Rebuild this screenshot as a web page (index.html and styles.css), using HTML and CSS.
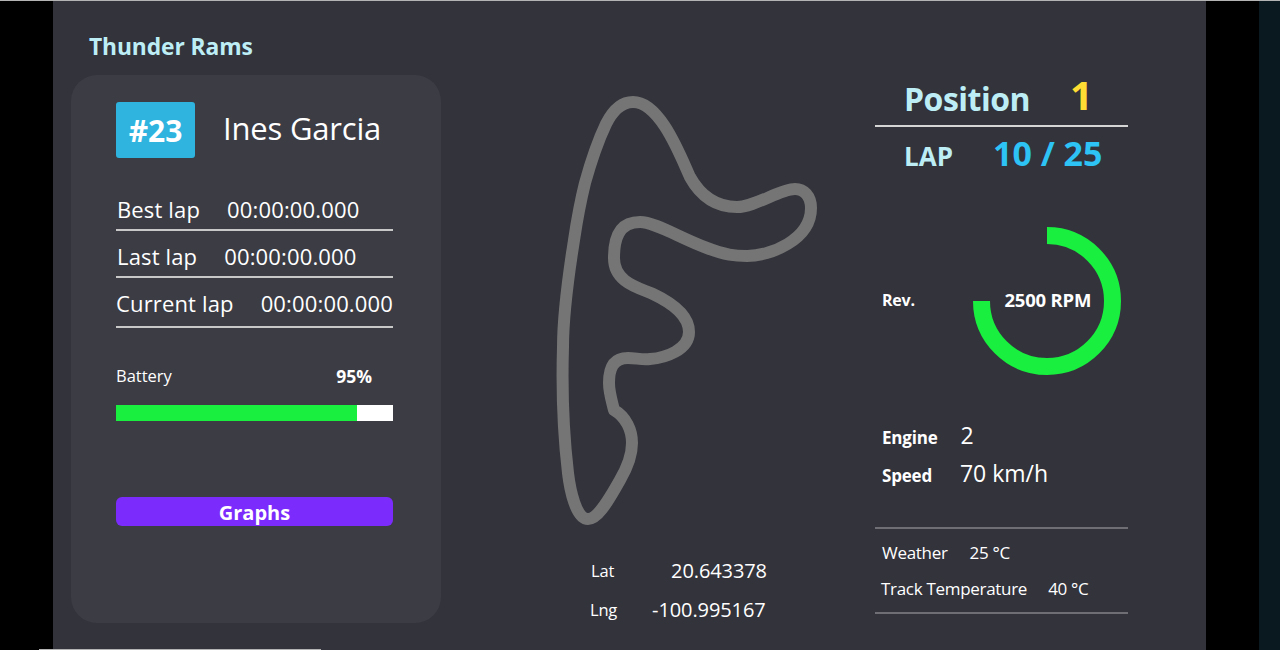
FILE: index.html
```html
<!DOCTYPE html>
<html lang="en">
<head>
    <meta charset="UTF-8">
    <meta name="viewport" content="width=device-width, initial-scale=1.0">
    <title>Thunder Rams Telemetry</title>
    <link rel="stylesheet" href="styles.css">
</head>
<body>

<div class="screen">
    <div class="dashboard">
        <!-- Left column: team and driver card -->
        <div class="col-left">
            <h1 class="team">Thunder Rams</h1>
            <div class="card">
                <div class="driver">
                    <span class="number">#23</span>
                    <span class="name">Ines Garcia</span>
                </div>
                <div class="lap-row lap-best"><span>Best lap</span><span>00:00:00.000</span></div>
                <div class="lap-row lap-last"><span>Last lap</span><span>00:00:00.000</span></div>
                <div class="lap-row lap-current"><span>Current lap</span><span>00:00:00.000</span></div>
                <div class="battery-head">
                    <span>Battery</span>
                    <strong>95%</strong>
                </div>
                <div class="battery-bar"><div class="battery-fill" style="width: 87%"></div></div>
                <button class="graphs-btn">Graphs</button>
            </div>
        </div>

        <!-- Center column: track map and coordinates -->
        <div class="col-center">
            <svg class="track" viewBox="550 90 280 440" width="280" height="440">
                <path fill="none" stroke="#757575" stroke-width="12" stroke-linejoin="round" d="M633 102
                    C620 102 612 112 606 124
                    C596 145 590 165 585 183
                    C577 215 575 235 572 253
                    C565 300 563 325 563 347
                    C562 380 563 430 568 473
                    C570 490 576 519 588 519
                    C597 519 606 505 620 480
                    C627 468 632 455 632 443
                    C632 430 626 417 614 410
                    C611 398 609 392 609 383
                    C609 370 612 358 628 358
                    C636 358 642 360 650 359
                    C665 358 689 350 689 332
                    C689 316 672 303 653 294
                    C640 288 614 283 614 258
                    C614 240 618 222 640 222
                    C655 222 680 238 707 248
                    C725 255 735 256 747 256
                    C770 256 811 240 811 208
                    C811 196 804 189 795 189
                    C780 189 755 207 737 207
                    C715 207 700 195 690 177
                    C680 155 660 102 633 102 Z"/>
            </svg>
            <div class="coord coord-lat"><span class="coord-label">Lat</span><span class="coord-value">20.643378</span></div>
            <div class="coord coord-lng"><span class="coord-label">Lng</span><span class="coord-value">-100.995167</span></div>
        </div>

        <!-- Right column: race stats -->
        <div class="col-right">
            <div class="position">
                <span class="position-label">Position</span>
                <span class="position-value">1</span>
            </div>
            <div class="lap-count">
                <span class="lap-label">LAP</span>
                <span class="lap-value">10 / 25</span>
            </div>
            <div class="rev">
                <span class="rev-label">Rev.</span>
                <div class="gauge">
                    <svg viewBox="0 0 150 150" width="150" height="150">
                        <path fill="none" stroke="#18ef3e" stroke-width="17" d="M75 9.5 A65.5 65.5 0 1 1 9.5 75"/>
                    </svg>
                    <span class="gauge-text">2500 RPM</span>
                </div>
            </div>
            <div class="stat stat-engine"><strong>Engine</strong><span>2</span></div>
            <div class="stat stat-speed"><strong>Speed</strong><span>70 km/h</span></div>
            <div class="conditions">
                <div class="cond cond-weather"><span>Weather</span><span>25 °C</span></div>
                <div class="cond cond-track"><span>Track Temperature</span><span>40 °C</span></div>
            </div>
        </div>
    </div>
    <div class="side-strip"></div>
    <!-- Scrollbar sliver along the bottom edge -->
    <div class="scroll-thumb"></div>
</div>

</body>
</html>
```

FILE: styles.css
```css
/* General page */
html, body {
    margin: 0;
    height: 100%;
    overflow: hidden;
    background-color: #000000;
}
body {
    font-family: "Open Sans", "Noto Sans", "Liberation Sans", sans-serif;
    color: #ffffff;
}
.screen {
    position: relative;
    box-sizing: border-box;
    height: 650px;
    padding-left: 53px;
    border-top: 1px solid #b4b4b4;
    display: flex;
    justify-content: space-between;
}
.dashboard {
    width: 1153px;
    height: 649px;
    background-color: #32333b;
    display: flex;
}
.side-strip {
    width: 21px;
    background-color: #0a1820;
}
.scroll-thumb {
    position: absolute;
    left: 39px;
    bottom: 0;
    width: 282px;
    height: 1px;
    background-color: #b4b4b4;
}

/* Left column */
.col-left {
    width: 388px;
    padding-left: 18px;
    box-sizing: border-box;
}
.team {
    margin: 32px 0 0 18px;
    font-size: 22.8px;
    line-height: 28px;
    font-weight: 700;
    letter-spacing: -0.1px;
    color: #bdeef6;
}
.card {
    margin-top: 14px;
    width: 370px;
    height: 548px;
    box-sizing: border-box;
    padding: 27px 48px 0 45px;
    background-color: #3b3c44;
    border-radius: 26px;
}
.driver {
    display: flex;
    align-items: center;
}
.number {
    width: 79px;
    height: 56px;
    border-radius: 3px;
    background-color: #2fb4df;
    display: flex;
    align-items: center;
    justify-content: center;
    font-size: 30px;
    font-weight: 700;
}
.name {
    margin-left: 28px;
    padding-bottom: 4px;
    font-size: 31px;
    letter-spacing: -0.2px;
}
.lap-row {
    display: flex;
    height: 29px;
    padding-bottom: 6px;
    align-items: center;
    font-size: 22px;
    letter-spacing: 0.15px;
    border-bottom: 2px solid #c8c8c8;
    white-space: nowrap;
}
.lap-best {
    margin-top: 36px;
    padding-left: 1px;
    gap: 27px;
}
.lap-last {
    margin-top: 10px;
    padding-left: 1px;
    gap: 27px;
}
.lap-current {
    margin-top: 13px;
    height: 23px;
    padding-bottom: 12px;
    justify-content: space-between;
}
.battery-head {
    margin-top: 36px;
    display: flex;
    justify-content: space-between;
    padding-right: 21px;
    font-size: 16.5px;
    line-height: 24px;
}
.battery-head strong {
    font-size: 17.5px;
    font-weight: 700;
}
.battery-bar {
    margin-top: 17px;
    height: 16px;
    background-color: #ffffff;
}
.battery-fill {
    height: 100%;
    background-color: #18ef3e;
}
.graphs-btn {
    display: block;
    width: 100%;
    height: 29px;
    margin-top: 76px;
    padding: 2px 0 0;
    border: 0;
    border-radius: 6px;
    background-color: #7b2bfc;
    color: #ffffff;
    font-family: inherit;
    font-size: 20px;
    font-weight: 700;
    line-height: 25px;
}

/* Center column */
.col-center {
    width: 434px;
    padding-left: 109px;
    box-sizing: border-box;
}
.track {
    display: block;
    margin-top: 89px;
}
.coord {
    display: flex;
    align-items: center;
    white-space: nowrap;
}
.coord-label {
    font-size: 16.5px;
    letter-spacing: -0.2px;
}
.coord-value {
    font-size: 20px;
    letter-spacing: -0.1px;
}
.coord-lat {
    margin-top: 27px;
    padding-left: 41px;
    gap: 57px;
}
.coord-lng {
    margin-top: 12px;
    padding-left: 40px;
    gap: 35px;
}

/* Right column */
.col-right {
    width: 253px;
}
.position {
    height: 126px;
    box-sizing: border-box;
    border-bottom: 2px solid #d5d5d5;
    padding: 71px 0 0 29px;
    display: flex;
    align-items: center;
    white-space: nowrap;
}
.position-label {
    font-size: 32px;
    font-weight: 700;
    letter-spacing: -0.5px;
    color: #bdeef6;
}
.position-value {
    margin-left: 40px;
    font-size: 40px;
    font-weight: 700;
    color: #ffdd33;
    position: relative;
    top: -4px;
}
.lap-count {
    margin-top: 3px;
    padding-left: 29px;
    display: flex;
    align-items: baseline;
    white-space: nowrap;
}
.lap-label {
    font-size: 26px;
    font-weight: 700;
    color: #bdeef6;
}
.lap-value {
    margin-left: 40px;
    font-size: 34px;
    font-weight: 700;
    color: #2dc3f5;
}
.rev {
    margin-top: 50px;
    display: flex;
    align-items: center;
    padding-left: 7px;
}
.rev-label {
    padding-bottom: 3px;
    font-size: 16px;
    font-weight: 700;
    letter-spacing: -0.2px;
}
.gauge {
    margin-left: 57px;
    display: grid;
    place-items: center;
}
.gauge svg, .gauge-text {
    grid-area: 1 / 1;
}
.gauge svg {
    display: block;
}
.gauge-text {
    padding: 0 0 3px 2px;
    font-size: 18.5px;
    font-weight: 700;
    letter-spacing: -0.2px;
    white-space: nowrap;
}
.stat {
    display: flex;
    align-items: baseline;
    padding-left: 7px;
    white-space: nowrap;
}
.stat strong {
    font-size: 17px;
    font-weight: 700;
    letter-spacing: -0.2px;
}
.stat span {
    font-size: 23px;
}
.stat-engine {
    margin-top: 43px;
    gap: 23px;
}
.stat-speed {
    margin-top: 6px;
    gap: 28px;
}
.conditions {
    margin-top: 38px;
    height: 87px;
    box-sizing: border-box;
    border-top: 2px solid #6e6e74;
    border-bottom: 2px solid #6e6e74;
    padding: 12px 0 0 6px;
}
.cond {
    display: flex;
    font-size: 17px;
    line-height: 24px;
    letter-spacing: -0.3px;
    white-space: nowrap;
}
.cond-weather {
    padding-left: 1px;
    gap: 22px;
}
.cond-track {
    margin-top: 12px;
    gap: 21px;
}
```
